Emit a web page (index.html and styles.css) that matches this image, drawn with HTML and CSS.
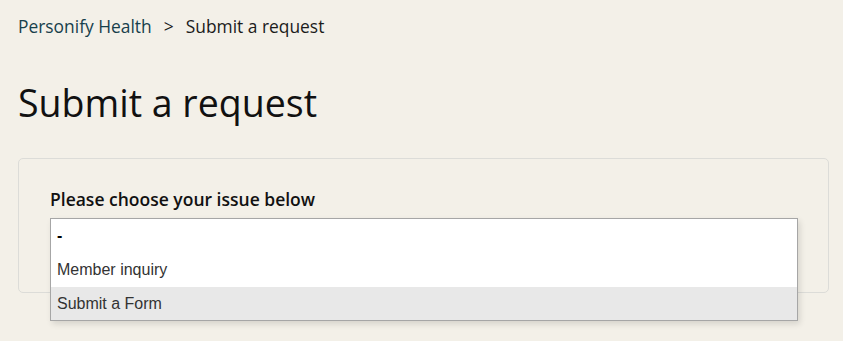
FILE: index.html
```html
<!DOCTYPE html>
<html lang="en">
<head>
<meta charset="utf-8">
<title>Submit a request</title>
<link rel="stylesheet" href="styles.css">
</head>
<body>
<div class="page">
  <nav class="breadcrumbs">
    <a class="crumb-link" href="#">Personify Health</a>
    <span class="sep">&gt;</span>
    <span class="crumb-current">Submit a request</span>
  </nav>
  <h1 class="title">Submit a request</h1>
  <div class="card">
    <label class="field-label">Please choose your issue below</label>
    <div class="select">
      <ul class="listbox">
        <li class="option">-</li>
        <li class="option">Member inquiry</li>
        <li class="option selected">Submit a Form</li>
      </ul>
    </div>
  </div>
</div>
</body>
</html>
```

FILE: styles.css
```css
html, body {
  margin: 0;
  padding: 0;
  background: #f3f0e8;
}
body {
  min-height: 341px;
  font-family: "Open Sans", "Noto Sans", sans-serif;
  color: #1b1b1b;
}
.page {
  padding: 13px 14px 0 18px;
}
.breadcrumbs {
  display: flex;
  align-items: center;
  gap: 12px;
  font-size: 17.4px;
  line-height: 26px;
}
.crumb-link {
  color: #17404c;
  text-decoration: none;
}
.crumb-current {
  color: #1b1b1b;
}
.title {
  margin: 38px 0 0 0;
  font-size: 37.5px;
  font-weight: 400;
  line-height: 52px;
  color: #111;
}
.card {
  margin-top: 29px;
  width: 811px;
  box-sizing: border-box;
  border: 1px solid #dcdcd8;
  border-radius: 5px;
  padding: 28px 30px 34px 31px;
}
.field-label {
  display: block;
  font-size: 17.5px;
  font-weight: 600;
  line-height: 24px;
  color: #111;
}
.select {
  position: relative;
  margin-top: 7px;
  height: 40px;
}
.listbox {
  position: absolute;
  left: 0;
  top: 0;
  right: 0;
  margin: 0;
  padding: 0;
  list-style: none;
  background: #fff;
  border: 1px solid #a6a6a6;
  box-shadow: 2px 3px 6px rgba(0,0,0,0.12);
  font-family: "Liberation Sans", Arial, sans-serif;
  font-size: 16px;
  color: #333;
  z-index: 2;
}
.option {
  height: 34px;
  line-height: 34px;
  padding-left: 6px;
}
.option:first-child {
  color: #000;
  font-weight: 700;
}
.option.selected {
  background: #e8e8e8;
  height: 33px;
}
```
